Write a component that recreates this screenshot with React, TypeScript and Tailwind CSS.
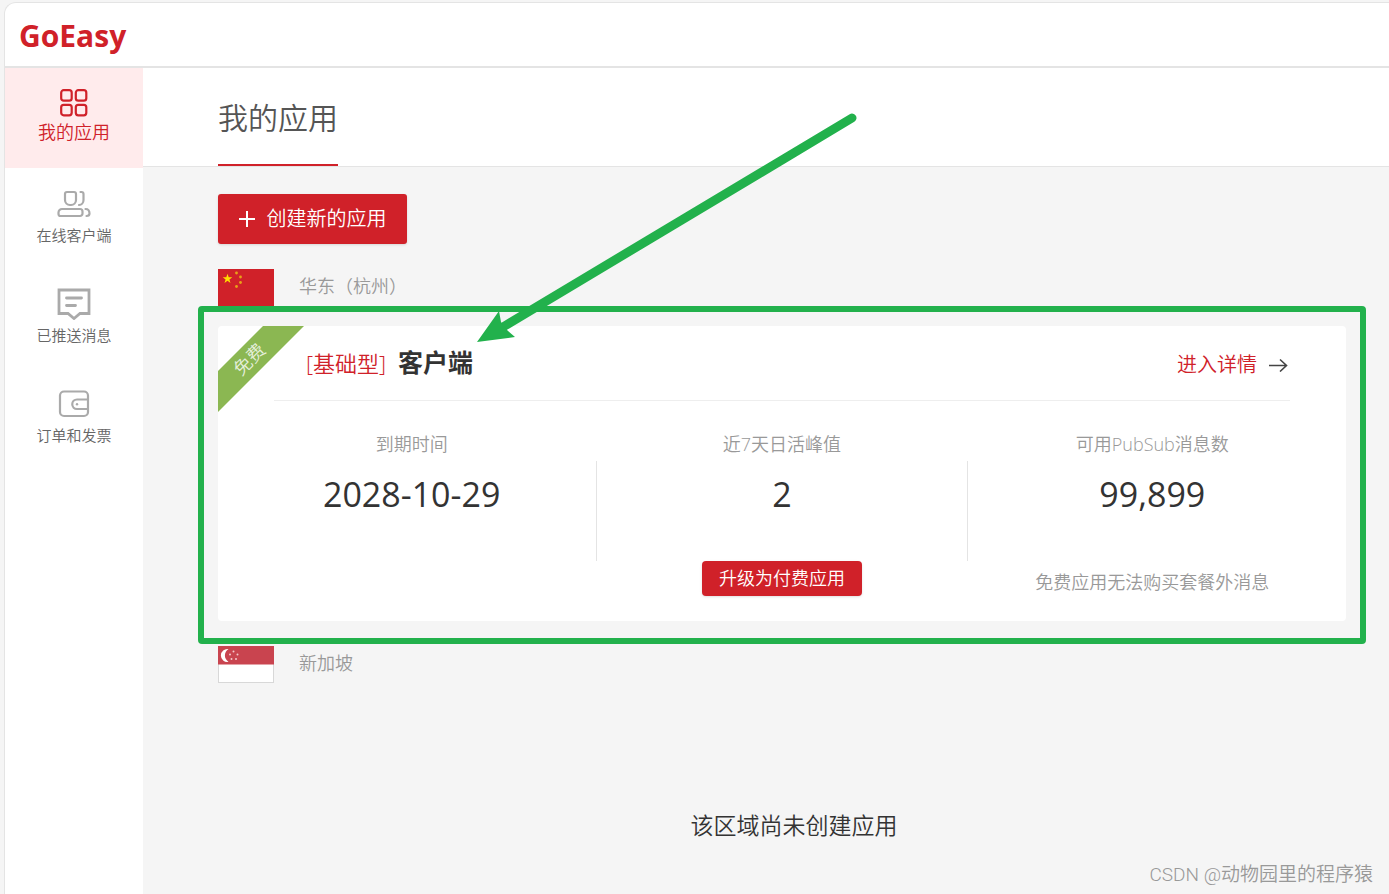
import React from 'react';
import clsx from 'clsx';

const AppsIcon: React.FC = () => (
  <svg width="28" height="30" viewBox="0 0 28 30" fill="none" stroke="currentColor" strokeWidth="2.2">
    <rect x="1.2" y="1.2" width="10.5" height="10.5" rx="2.5" />
    <rect x="15.8" y="1.2" width="10.5" height="10.5" rx="2.5" />
    <rect x="1.2" y="15.8" width="10.5" height="10.5" rx="2.5" />
    <rect x="15.8" y="15.8" width="10.5" height="10.5" rx="2.5" />
  </svg>
);

const ClientsIcon: React.FC = () => (
  <svg width="34" height="28" viewBox="0 0 34 28" fill="none" stroke="currentColor" strokeWidth="2.2" strokeLinecap="round">
    <path d="M10 2h7a2 2 0 0 1 2 2v6a5 5 0 0 1-5 5h-1a5 5 0 0 1-5-5V4a2 2 0 0 1 2-2z" />
    <path d="M23.5 2h1a2 2 0 0 1 2 2v6c0 3-2 5-4.500 5" />
    <path d="M5 19h18a2.500 2.500 0 0 1 2.500 2.500v2A2.500 2.500 0 0 1 23 26H3.500a2 2 0 0 1-2-2v-1.500A3.500 3.500 0 0 1 5 19z" />
    <path d="M28.5 19c2.500 0 4 2 4 4.500 0 1.500-1 2.500-3 2.500" />
  </svg>
);

const MessageIcon: React.FC = () => (
  <svg width="34" height="32" viewBox="0 0 34 32" fill="none" stroke="currentColor" strokeWidth="2.8">
    <path d="M2 2h30v23.5h-9L17 30.5l-6-5H2z" />
    <path d="M9.5 10h15M9.5 17.5h9" strokeLinecap="round" />
  </svg>
);

const WalletIcon: React.FC = () => (
  <svg width="32" height="28" viewBox="0 0 32 28" fill="none" stroke="currentColor" strokeWidth="2.2">
    <rect x="2" y="1.5" width="28" height="24.5" rx="4" />
    <path d="M30 9.5H19a4.700 4.700 0 0 0 0 9.500h11" />
    <circle cx="19" cy="14.3" r="1.2" fill="currentColor" stroke="none" />
  </svg>
);

const ChinaFlag: React.FC = () => (
  <svg width="56" height="38" viewBox="0 0 56 38">
    <rect width="56" height="38" fill="#d02129" />
    <path d="M9.5 4.800l1.200 3.400h3.600l-2.900 2.200 1.100 3.500-3-2.100-3 2.100 1.100-3.500-2.900-2.200h3.600z" fill="#ffde00" />
    <g fill="#e8a317">
      <circle cx="18.5" cy="4" r="1.4" />
      <circle cx="22.5" cy="8" r="1.4" />
      <circle cx="22.5" cy="13.5" r="1.4" />
      <circle cx="18.5" cy="17.5" r="1.4" />
    </g>
  </svg>
);

const SingaporeFlag: React.FC = () => (
  <svg width="56" height="37" viewBox="0 0 56 37">
    <rect x="0.5" y="0.5" width="55" height="36" fill="#fff" stroke="#d8d8d8" />
    <rect width="56" height="18.5" fill="#c9444f" />
    <path d="M10.5 3a6.500 6.500 0 1 0 0 12.800A7.500 7.500 0 0 1 10.500 3z" fill="#fff" />
    <g fill="#f3c9cc">
      <circle cx="15.5" cy="5.5" r="1" />
      <circle cx="19.5" cy="8.5" r="1" />
      <circle cx="12" cy="8.5" r="1" />
      <circle cx="13.5" cy="13" r="1" />
      <circle cx="18" cy="13" r="1" />
    </g>
  </svg>
);

const navItems = [
  { label: '我的应用', icon: <AppsIcon />, active: true },
  { label: '在线客户端', icon: <ClientsIcon />, active: false },
  { label: '已推送消息', icon: <MessageIcon />, active: false },
  { label: '订单和发票', icon: <WalletIcon />, active: false },
];

const Sidebar: React.FC = () => (
  <nav className="w-[138px] shrink-0 bg-white">
    {navItems.map((item) => (
      <a
        key={item.label}
        href="#"
        className={clsx(
          'flex h-[100px] flex-col items-center pt-5',
          item.active ? 'bg-[#ffebec] text-[#d02129]' : 'text-[#aaaaaa]'
        )}
      >
        <span className="flex h-8 items-center justify-center">{item.icon}</span>
        <span className={item.active ? 'text-[18px] leading-6' : 'text-[15px] leading-[30px] text-[#666666]'}>
          {item.label}
        </span>
      </a>
    ))}
  </nav>
);

interface StatProps {
  label: string;
  value: string;
  children?: React.ReactNode;
}

const Stat: React.FC<StatProps> = ({ label, value, children }) => (
  <div className="flex flex-1 flex-col items-center pt-[31px]">
    <div className="text-[18px] leading-6 text-[#999999]">{label}</div>
    <div className="mt-[14px] mb-[42px] text-[34px] leading-[49px] font-normal text-[#333333]">{value}</div>
    {children}
  </div>
);

const Divider: React.FC = () => <div className="mt-[60px] h-[100px] w-px bg-[#e4e4e4]" />;

const AppCard: React.FC = () => (
  <section className="relative mt-[19px] rounded-[4px] bg-white pb-[25px]">
    {/* corner ribbon */}
    <svg className="absolute top-0 left-0" width="86" height="86" viewBox="0 0 86 86">
      <path d="M45 0h41L0 86V45z" fill="#8bb752" />
      <text x="31" y="33" fontSize="18" fill="#fff" fillOpacity="0.8" textAnchor="middle" dominantBaseline="central" transform="rotate(-45 31 33)">
        免费
      </text>
    </svg>

    <div className="mx-14 flex h-[75px] items-center justify-between border-b border-[#eeeeee] pl-8">
      <h2 className="flex items-center gap-3">
        <span className="text-[22px] text-[#d02129]">[基础型]</span>
        <span className="text-[25px] font-bold text-[#333333]">客户端</span>
      </h2>
      <a href="#" className="flex items-center gap-3 pt-1 pr-[2px] text-[20px] text-[#d02129]">
        进入详情
        <svg width="19" height="14" viewBox="0 0 19 14" fill="none" stroke="#444" strokeWidth="1.6">
          <path d="M0 7.500h17.500M11 1.500l6.500 6-6.500 6" />
        </svg>
      </a>
    </div>

    <div className="flex px-[9px]">
      <Stat label="到期时间" value="2028-10-29" />
      <Divider />
      <Stat label="近7天日活峰值" value="2">
        <button className="h-[35px] w-40 rounded-[4px] bg-[#d02129] text-[18px] text-white shadow-sm">升级为付费应用</button>
      </Stat>
      <Divider />
      <Stat label="可用PubSub消息数" value="99,899">
        <p className="-mb-2 text-[18px] leading-[42px] text-[#999999]">免费应用无法购买套餐外消息</p>
      </Stat>
    </div>

    {/* highlight frame and pointer */}
    <div className="pointer-events-none absolute -top-5 -right-5 -bottom-[23px] -left-5 rounded-[4px] border-[6px] border-[#22b14c]" />
    <svg className="pointer-events-none absolute -top-[216px] left-[252px]" width="400" height="240" viewBox="0 0 400 240">
      <path d="M382 8L33 217" stroke="#22b14c" strokeWidth="9" strokeLinecap="round" />
      <path d="M7 232L29 201l2 11 6 8 8 7z" fill="#22b14c" />
    </svg>
  </section>
);

const App: React.FC = () => {
  return (
    <div className="flex min-h-screen flex-col bg-[#f5f5f5] pt-[2px] pl-1 font-['Open_Sans','Noto_Sans_CJK_SC',sans-serif] font-[350]">
      <div className="relative flex grow flex-col overflow-hidden rounded-tl-[12px] border-t border-l border-[#e4e4e4] bg-white">
        <header className="flex h-[65px] items-center border-b-2 border-[#e4e4e4] pl-[14px]">
          <h1 className="pt-[2px] text-[30px] font-bold text-[#d02129]">GoEasy</h1>
        </header>

        <div className="flex grow">
          <Sidebar />
          <main className="min-w-0 grow bg-[#f5f5f5]">
            <div className="h-[99px] border-b border-[#e4e4e4] bg-white pl-[75px]">
              <h2 className="inline-block h-[98px] border-b-2 border-[#d02129] text-[30px] leading-[100px] text-[#555555]">
                我的应用
              </h2>
            </div>

            <div className="pt-[27px] pr-[43px] pl-[75px]">
              <button className="flex h-[50px] w-[189px] items-center justify-center gap-3 rounded-[3px] bg-[#d02129] text-[20px] text-white shadow-sm">
                <svg width="16" height="16" viewBox="0 0 16 16" stroke="currentColor" strokeWidth="2">
                  <path d="M0 8h16M8 0v16" />
                </svg>
                创建新的应用
              </button>

              <div className="mt-[25px] flex gap-[25px] text-[18px] leading-[34px] text-[#999999]">
                <ChinaFlag />
                <span>华东（杭州）</span>
              </div>
              <AppCard />

              <div className="mt-[25px] flex gap-[25px] text-[18px] leading-[34px] text-[#999999]">
                <SingaporeFlag />
                <span>新加坡</span>
              </div>
              <p className="mt-[124px] pl-6 text-center text-[23px] leading-9 text-[#333333]">该区域尚未创建应用</p>
            </div>
          </main>
        </div>

        <div className="absolute right-4 bottom-1 font-['Roboto','Noto_Sans_CJK_SC',sans-serif] text-[19px] leading-[30px] text-[#999999]">
          CSDN @动物园里的程序猿
        </div>
      </div>
    </div>
  );
};

export default App;
